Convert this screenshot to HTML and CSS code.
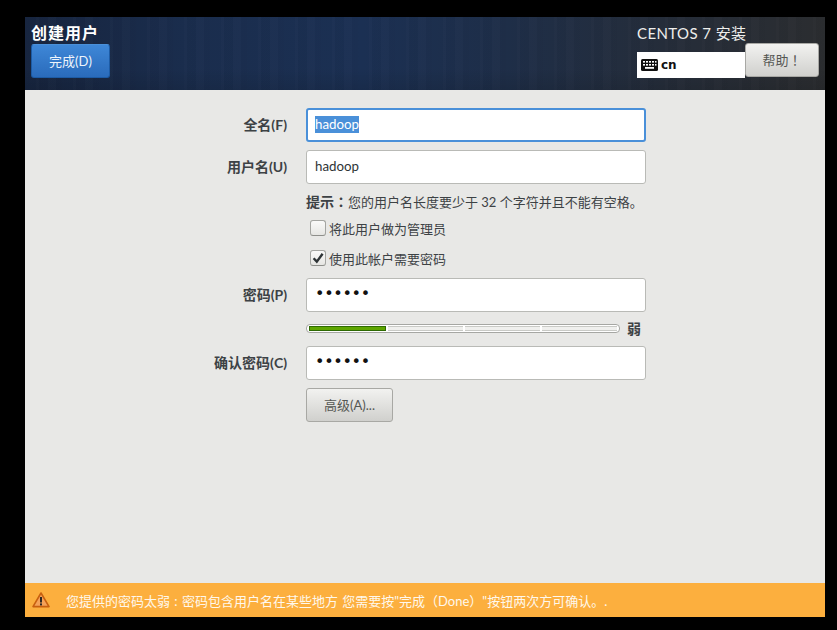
FILE: index.html
```html
<!DOCTYPE html>
<html lang="zh-CN">
<head>
<meta charset="utf-8">
<title>创建用户</title>
<link rel="stylesheet" href="styles.css">
</head>
<body>
<div class="window">
  <header class="topbar">
    <div class="top-left">
      <div class="spoke-title">创建用户</div>
      <button class="btn btn-done">完成(D)</button>
    </div>
    <div class="top-right">
      <div class="product">CENTOS 7 安装</div>
      <div class="top-controls">
        <div class="layout">
          <svg class="kbd" width="17" height="12" viewBox="0 0 17 12"><rect width="17" height="12" rx="1.5" fill="#111"/><g fill="#fff"><rect x="2" y="2" width="2" height="1.6"/><rect x="5" y="2" width="2" height="1.6"/><rect x="8" y="2" width="2" height="1.6"/><rect x="11" y="2" width="2" height="1.6"/><rect x="14" y="2" width="1.5" height="1.6"/><rect x="2" y="5" width="2" height="1.6"/><rect x="5" y="5" width="2" height="1.6"/><rect x="8" y="5" width="2" height="1.6"/><rect x="11" y="5" width="2" height="1.6"/><rect x="14" y="5" width="1.5" height="1.6"/><rect x="4" y="8" width="9" height="1.8"/></g></svg>
          <span class="layout-name">cn</span>
        </div>
        <button class="btn btn-help" lang="zh-TW">帮助！</button>
      </div>
    </div>
  </header>

  <main class="content">
    <div class="form">
      <label class="label">全名(F)</label>
      <div class="entry entry-focus"><span class="selected">hadoop</span></div>

      <label class="label">用户名(U)</label>
      <div class="entry">hadoop</div>

      <div class="hint span"><b lang="zh-TW">提示：</b>您的用户名长度要少于 32 个字符并且不能有空格。</div>

      <div class="check span check-first"><span class="box"></span>将此用户做为管理员</div>
      <div class="check span check-second"><span class="box"><svg width="14" height="14" viewBox="0 0 14 14"><path d="M2.6 7.2 L5.8 10.6 L11.6 2.8" fill="none" stroke="#2e3436" stroke-width="2.4"/></svg></span>使用此帐户需要密码</div>

      <label class="label row-pass">密码(P)</label>
      <div class="entry dots row-pass">••••••</div>

      <div class="strength span">
        <div class="meter"><span class="seg seg-on"></span><span class="seg"></span><span class="seg"></span><span class="seg"></span></div>
        <span class="strength-text">弱</span>
      </div>

      <label class="label row-confirm">确认密码(C)</label>
      <div class="entry dots row-confirm">••••••</div>

      <div class="span adv-row"><button class="btn btn-adv">高级(A)...</button></div>
    </div>
  </main>

  <footer class="banner">
    <svg class="warn" width="18" height="16" viewBox="0 0 18 16"><path d="M9 1 L17 14.6 H1 Z" fill="#f4a25a" stroke="#c8600f" stroke-width="1.6" stroke-linejoin="round"/><rect x="8" y="5" width="2" height="5.5" fill="#2e2a26"/><rect x="8" y="11.4" width="2" height="2" fill="#2e2a26"/></svg>
    <span class="banner-text">您提供的密码太弱 : 密码包含用户名在某些地方 您需要按"完成（Done）"按钮两次方可确认。.</span>
  </footer>
</div>
</body>
</html>
```

FILE: styles.css
```css
* { box-sizing: border-box; }

html, body {
  margin: 0;
  height: 630px;
  background: #000;
  overflow: hidden;
}

body {
  padding: 17px 12px 13px 25px;
  font-family: "Lato", "Noto Sans CJK SC", sans-serif;
  font-size: 13px;
  color: #2e3436;
}

.window {
  width: 800px;
  height: 600px;
  display: flex;
  flex-direction: column;
  background: #e8e8e6;
}

.topbar {
  height: 73px;
  flex: none;
  display: flex;
  justify-content: space-between;
  padding: 0 6px;
  background:
    linear-gradient(rgba(0,0,0,0) 70%, rgba(0,0,0,.1) 100%),
    repeating-linear-gradient(90deg, rgba(255,255,255,0) 0 11px, rgba(255,255,255,.012) 11px 14px, rgba(0,0,0,.02) 14px 23px, rgba(255,255,255,.01) 23px 31px, rgba(0,0,0,.015) 31px 37px),
    linear-gradient(90deg, #17253f 0, #1a2d4d 20%, #1b3053 42%, #1e2e48 60%, #252d3a 80%, #2b2d30 100%);
}

.top-left { display: flex; flex-direction: column; align-items: flex-start; }

.spoke-title {
  height: 27px;
  line-height: 32px;
  font-size: 16px;
  font-weight: 700;
  letter-spacing: 1px;
  color: #fff;
}

.btn {
  font-family: inherit;
  font-size: 13px;
  border-radius: 3px;
  padding: 0 0 2px;
  height: 34px;
}

.btn-done {
  width: 79px;
  color: #eef4fb;
  border: 1px solid #1c5ba5;
  border-top-color: #4a90d9;
  background: linear-gradient(#3e87d7, #2a6bbb);
}

.top-right { width: 182px; display: flex; flex-direction: column; }

.product {
  height: 27px;
  line-height: 32px;
  font-size: 15px;
  letter-spacing: .4px;
  color: #eeeeec;
  white-space: nowrap;
}

.top-controls { display: flex; align-items: flex-end; height: 34px; }

.layout {
  width: 108px;
  height: 26px;
  display: flex;
  align-items: center;
  gap: 3px;
  padding-left: 4px;
  background: #fff;
  color: #111;
}

.layout-name { font-family: "DejaVu Sans", sans-serif; font-weight: 700; font-size: 12px; }

.btn-help {
  width: 74px;
  height: 34px;
  margin-bottom: 1px;
  font-family: "Lato", "Noto Sans CJK TC", sans-serif;
  font-size: 13px;
  color: #555753;
  border: 1px solid #a8a8a4;
  background: linear-gradient(#f2f2f0, #d0d0cd);
}

.content { flex: 1; padding-top: 18px; }

.form {
  display: grid;
  grid-template-columns: 262px 340px;
  column-gap: 19px;
  row-gap: 8px;
  align-items: center;
}

.label {
  justify-self: end;
  position: relative;
  top: -1px;
  font-size: 14px;
  font-weight: 700;
  color: #3d4245;
}

.entry {
  grid-column: 2;
  height: 34px;
  line-height: 30px;
  padding-left: 8px;
  background: #fff;
  border: 1px solid #b9bab6;
  border-radius: 3px;
  color: #2e3436;
  font-size: 13.3px;
}

.entry-focus { border: 2px solid #4a90d9; line-height: 28px; padding-left: 7px; }

.selected { background: #4a90d9; color: #fff; display: inline-block; line-height: 17px; }

.span { grid-column: 2; }

.hint { height: 17px; margin-top: -1px; font-size: 13px; white-space: nowrap; color: #3d4245; }
.hint b { font-family: "Lato", "Noto Sans CJK TC", sans-serif; font-size: 14px; font-weight: 700; }

.check {
  display: flex;
  align-items: center;
  gap: 3px;
  height: 18px;
  padding-left: 4px;
  color: #3d4245;
  white-space: nowrap;
}

.check-first { margin-top: 3px; }
.check-second { margin-top: 4px; }

.box {
  width: 16px;
  height: 16px;
  flex: none;
  display: flex;
  align-items: center;
  justify-content: center;
  background: linear-gradient(#fafaf9, #e6e6e3);
  border: 1px solid #a4a5a1;
  border-bottom-color: #8e8f8b;
  border-radius: 3px;
}

.row-pass { margin-top: 3px; }

.dots {
  font-family: "DejaVu Sans", sans-serif;
  font-size: 16px;
  letter-spacing: -.3px;
  color: #111;
  line-height: 30px;
}

.strength {
  display: flex;
  align-items: center;
  gap: 7px;
  height: 16px;
  width: 340px;
}

.meter {
  width: 314px;
  height: 9px;
  display: flex;
  gap: 2px;
  padding: 1px 2px;
  background: #fff;
  border: 1px solid #a6a7a3;
  border-radius: 4px;
  flex: none;
}

.seg { flex: 1; background: #f0f0ee; border-top: 1px solid #c9cac6; border-bottom: 1px solid #c9cac6; }
.seg-on { background: #5ea500; border: 1px solid #2e6a02; }

.strength-text { font-size: 14px; font-weight: 700; color: #3d4245; }

.row-confirm { margin-top: 2px; }

.btn-adv {
  width: 87px;
  display: block;
  color: #555753;
  border: 1px solid #a8a8a4;
  background: linear-gradient(#f2f2f0, #d0d0cd);
}

.banner {
  height: 34px;
  flex: none;
  display: flex;
  align-items: center;
  gap: 16px;
  padding-left: 7px;
  background: #fcaf3e;
  color: #fff8ec;
  white-space: nowrap;
}

.banner-text { font-size: 13px; word-spacing: 1px; }
```
